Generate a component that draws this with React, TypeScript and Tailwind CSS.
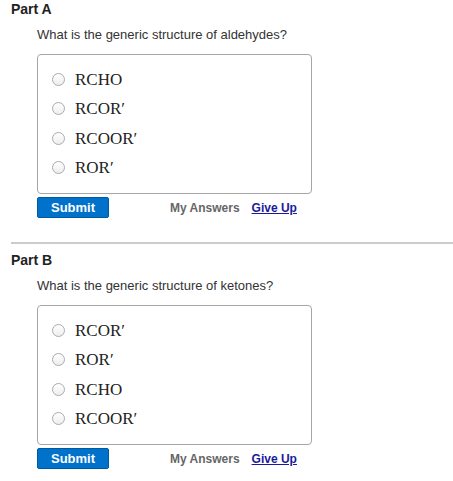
const sections = [
  {
    title: "Part A",
    question: "What is the generic structure of aldehydes?",
    options: ["RCHO", "RCOR′", "RCOOR′", "ROR′"],
  },
  {
    title: "Part B",
    question: "What is the generic structure of ketones?",
    options: ["RCOR′", "ROR′", "RCHO", "RCOOR′"],
  },
];

function Option({ label }: { label: string }) {
  return (
    <label className="flex h-[29.33px] items-center">
      <span className="ml-[14px] box-border h-[13px] w-[13px] shrink-0 rounded-full border border-[#ababab] bg-gradient-to-b from-white to-[#eeeeee]" />
      <span
        className="ml-[10px] text-[17px] leading-none text-[#222]"
        style={{ fontFamily: '"Liberation Serif", "DejaVu Serif", serif' }}
      >
        {label}
      </span>
    </label>
  );
}

function Part({ title, question, options }: (typeof sections)[number]) {
  return (
    <div>
      <h2 className="h-[18px] pl-[11px] text-[14px] font-bold leading-[18px] text-[#222]">{title}</h2>
      <div className="pl-[37px]">
        <p className="mt-[9px] h-[16px] text-[13px] leading-[16px] text-[#333]">{question}</p>
        <div className="mt-[11px] h-[140px] w-[275px] rounded-[4px] border border-[#a6a6a6] bg-white pt-[10px]">
          {options.map((o) => (
            <Option key={o} label={o} />
          ))}
        </div>
        <div className="mt-[3px] flex h-[21px] items-center">
          <button className="h-[21px] w-[72px] rounded-[2px] border border-[#005a9e] bg-[#0072cc] text-[13px] font-bold leading-none text-white">
            Submit
          </button>
          <span className="ml-[61px] text-[12px] font-bold text-[#666]">My Answers</span>
          <a href="#" className="ml-[12px] text-[12px] font-bold text-[#1a1a9c] underline">
            Give Up
          </a>
        </div>
      </div>
    </div>
  );
}

export default function App() {
  return (
    <div
      className="h-[481px] w-[453px] overflow-hidden bg-white"
      style={{ fontFamily: '"Liberation Sans", Arial, sans-serif' }}
    >
      <Part {...sections[0]} />
      <div className="ml-[11px] mt-[24px] h-[2px] bg-[#cccccc]" />
      <div className="mt-[7px]">
        <Part {...sections[1]} />
      </div>
    </div>
  );
}
